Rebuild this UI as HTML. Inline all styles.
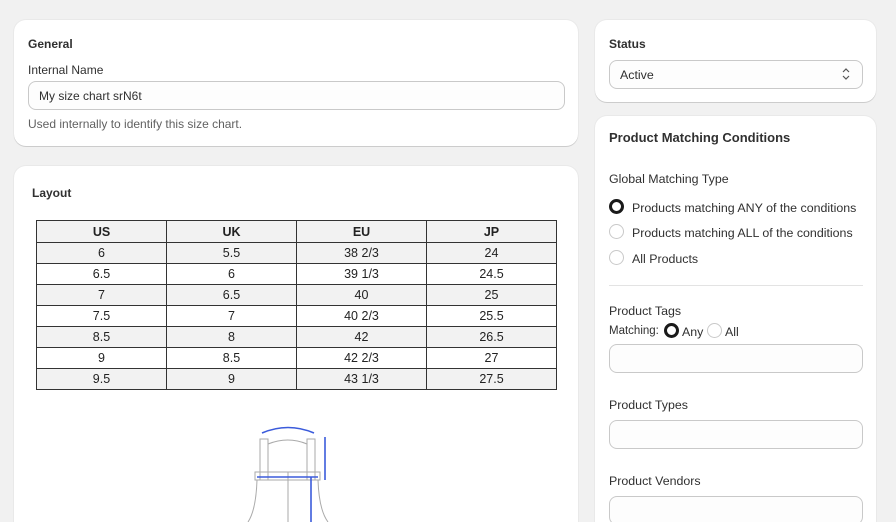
<!DOCTYPE html>
<html><head><meta charset="utf-8"><style>
*{box-sizing:border-box;margin:0;padding:0}
html,body{width:896px;height:522px;overflow:hidden}
body{background:#f1f1f1;font-family:"Liberation Sans",Arial,sans-serif;color:#303030;position:relative;font-size:12px}
.card{position:absolute;background:#fff;border-radius:12px;box-shadow:0 1px 0 rgba(0,0,0,.12),0 0 0 1px rgba(0,0,0,.03)}
.t{position:absolute;white-space:nowrap}
.b{font-weight:bold}
.r{font-size:12.4px}
.inp{position:absolute;border:1px solid #c9c9c9;border-radius:8px;background:#fdfdfd}
table{position:absolute;left:36px;top:220px;border-collapse:collapse;width:521px;font-size:12.5px;color:#222}
td{border:1px solid #333;height:21px;text-align:center;width:130px;padding:0}
tr.g td{background:#f2f2f2}
th{border:1px solid #333;height:22px;background:#f2f2f2;font-weight:bold;font-size:12.5px}
.rad{position:absolute;width:15px;height:15px;border-radius:50%;border:1px solid #c9c9c9;background:#fff}
.rad.on{border:3.5px solid #1a1a1a}
</style></head><body>
<div class="card" style="left:14px;top:20px;width:564px;height:126px"></div>
<div class="t b" style="left:28px;top:37px">General</div>
<div class="t" style="left:28px;top:63px">Internal Name</div>
<div class="inp" style="left:28px;top:81px;width:537px;height:29px"></div>
<div class="t" style="left:39px;top:89px">My size chart srN6t</div>
<div class="t" style="left:28px;top:117px;color:#616161">Used internally to identify this size chart.</div>

<div class="card" style="left:14px;top:166px;width:564px;height:380px"></div>
<div class="t b" style="left:32px;top:186px">Layout</div>
<table>
<tr><th>US</th><th>UK</th><th>EU</th><th>JP</th></tr>
<tr class="g"><td>6</td><td>5.5</td><td>38 2/3</td><td>24</td></tr>
<tr><td>6.5</td><td>6</td><td>39 1/3</td><td>24.5</td></tr>
<tr class="g"><td>7</td><td>6.5</td><td>40</td><td>25</td></tr>
<tr><td>7.5</td><td>7</td><td>40 2/3</td><td>25.5</td></tr>
<tr class="g"><td>8.5</td><td>8</td><td>42</td><td>26.5</td></tr>
<tr><td>9</td><td>8.5</td><td>42 2/3</td><td>27</td></tr>
<tr class="g"><td>9.5</td><td>9</td><td>43 1/3</td><td>27.5</td></tr>
</table>
<svg style="position:absolute;left:200px;top:400px" width="180" height="122" fill="none">
<g stroke="#aaa" stroke-width="1">
<rect x="60" y="39" width="8" height="41"/><rect x="107" y="39" width="8" height="41"/>
<path d="M68 44 Q88 36 107 44"/>
<path d="M55 72 H120 V80 H55 Z"/>
<path d="M88 72 V122"/>
<path d="M57 80 Q56 110 48 122"/><path d="M118 80 Q119 110 128 122"/>
</g>
<g stroke="#3b5bdb" stroke-width="1.6">
<path d="M62 33 Q88 22 114 33"/><path d="M125 37 V80"/><path d="M57 77 H118"/><path d="M111 77 V122"/>
</g>
</svg>

<div class="card" style="left:595px;top:20px;width:281px;height:82px"></div>
<div class="t b" style="left:609px;top:37px">Status</div>
<div class="inp" style="left:609px;top:60px;width:254px;height:29px"></div>
<div class="t r" style="left:620px;top:68px">Active</div>
<svg style="position:absolute;left:841px;top:67px" width="10" height="14" fill="none" stroke="#555" stroke-width="1.2"><path d="M2 5 L5 2 L8 5 M2 9 L5 12 L8 9"/></svg>

<div class="card" style="left:595px;top:116px;width:281px;height:430px"></div>
<div class="t b" style="left:609px;top:130px;font-size:13px">Product Matching Conditions</div>
<div class="t r" style="left:609px;top:172px">Global Matching Type</div>
<div class="rad on" style="left:609px;top:199px"></div><div class="t r" style="left:632px;top:201px">Products matching ANY of the conditions</div>
<div class="rad" style="left:609px;top:224px"></div><div class="t r" style="left:632px;top:226px">Products matching ALL of the conditions</div>
<div class="rad" style="left:609px;top:250px"></div><div class="t r" style="left:632px;top:252px">All Products</div>
<div style="position:absolute;left:609px;top:285px;width:254px;height:1px;background:#e3e3e3"></div>
<div class="t r" style="left:609px;top:304px">Product Tags</div>
<div class="t" style="left:609px;top:325px;font-size:11.5px">Matching:</div>
<div class="rad on" style="left:664px;top:323px"></div><div class="t r" style="left:682px;top:325px">Any</div>
<div class="rad" style="left:707px;top:323px"></div><div class="t r" style="left:725px;top:325px">All</div>
<div class="inp" style="left:609px;top:344px;width:254px;height:29px"></div>
<div class="t r" style="left:609px;top:398px">Product Types</div>
<div class="inp" style="left:609px;top:420px;width:254px;height:29px"></div>
<div class="t r" style="left:609px;top:474px">Product Vendors</div>
<div class="inp" style="left:609px;top:496px;width:254px;height:29px"></div>
</body></html>
